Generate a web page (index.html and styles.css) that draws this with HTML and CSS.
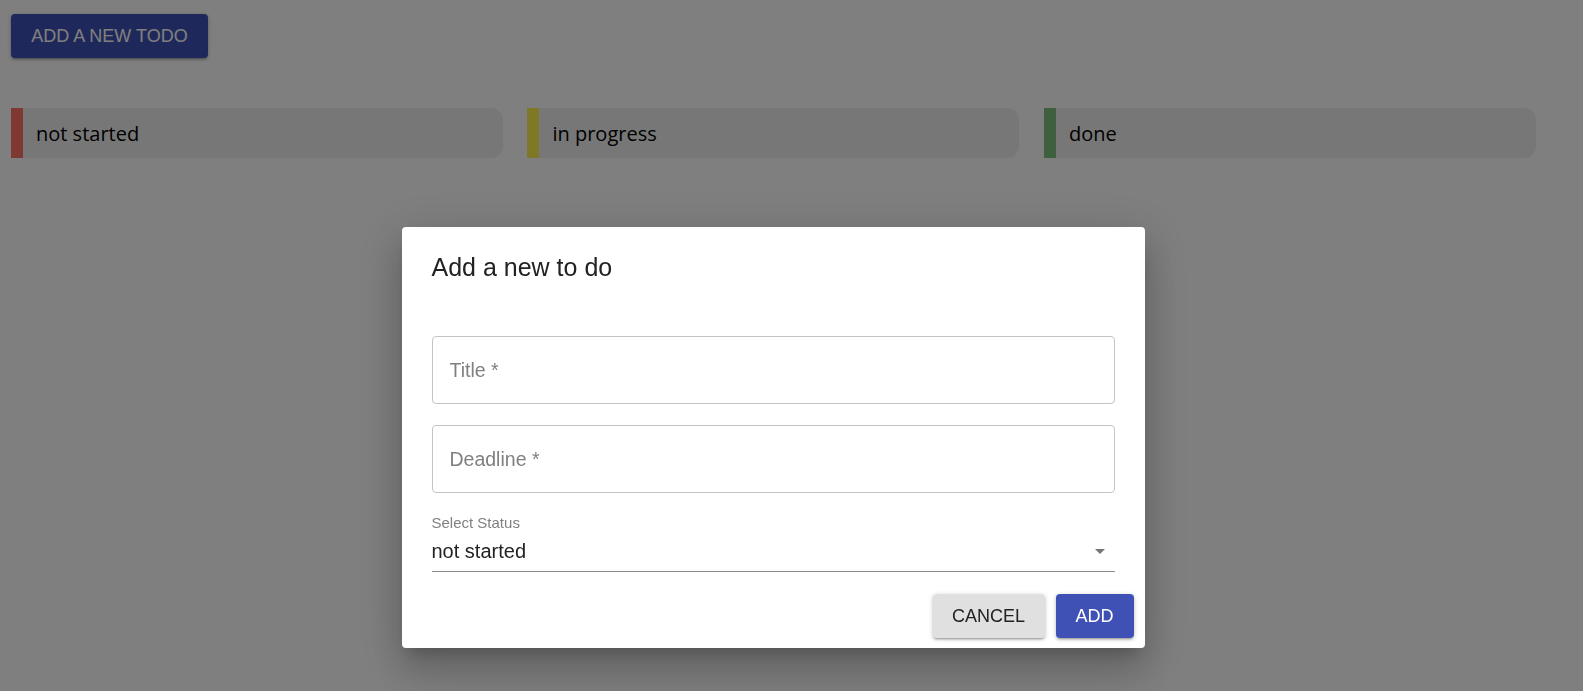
FILE: index.html
```html
<!DOCTYPE html>
<html>
<head>
<meta charset="utf-8">
<link rel="stylesheet" href="styles.css">
</head>
<body>
<div class="page">
  <div class="toolbar">
    <button class="btn-primary big">ADD A NEW TODO</button>
  </div>
  <div class="columns">
    <div class="column"><span class="bar red"></span><span class="col-title">not started</span></div>
    <div class="column"><span class="bar yellow"></span><span class="col-title">in progress</span></div>
    <div class="column"><span class="bar green"></span><span class="col-title">done</span></div>
  </div>
</div>
<div class="overlay">
  <div class="dialog">
    <h2 class="dialog-title">Add a new to do</h2>
    <div class="dialog-content">
      <div class="field"><span class="placeholder">Title *</span></div>
      <div class="field"><span class="placeholder">Deadline *</span></div>
      <div class="select">
        <div class="select-label">Select Status</div>
        <div class="select-row">
          <span class="select-value">not started</span>
          <svg class="caret" width="24" height="24" viewBox="0 0 24 24"><path d="M7 10l5 5 5-5z" fill="#757575"/></svg>
        </div>
      </div>
    </div>
    <div class="dialog-actions">
      <button class="btn-default">CANCEL</button>
      <button class="btn-primary">ADD</button>
    </div>
  </div>
</div>
</body>
</html>
```

FILE: styles.css
```css
html, body {
  margin: 0;
  padding: 0;
  background: #ffffff;
  font-family: "Liberation Sans", Arial, sans-serif;
}

.page {
  padding: 14px 11px;
}

.toolbar {
  display: flex;
}

button {
  font-family: "Liberation Sans", Arial, sans-serif;
  border: none;
  border-radius: 4px;
  cursor: pointer;
}

.btn-primary {
  background: #3f51b5;
  color: #ffffff;
  font-size: 18px;
  height: 44px;
  padding: 0 20px;
  box-shadow: 0 1px 5px rgba(0,0,0,0.2), 0 2px 2px rgba(0,0,0,0.14), 0 3px 1px -2px rgba(0,0,0,0.12);
}

.btn-primary.big {
  width: 197px;
  padding: 0;
}

.btn-default {
  background: #e0e0e0;
  color: #222222;
  font-size: 18px;
  height: 44px;
  width: 112px;
  box-shadow: 0 1px 5px rgba(0,0,0,0.2), 0 2px 2px rgba(0,0,0,0.14), 0 3px 1px -2px rgba(0,0,0,0.12);
}

.columns {
  display: grid;
  grid-template-columns: repeat(3, 491.67px);
  column-gap: 24.8px;
  margin-top: 50px;
}

.column {
  display: flex;
  align-items: center;
  height: 50px;
  background: #eeeeee;
  border-radius: 0 12px 12px 0;
}

.bar {
  width: 12px;
  align-self: stretch;
}

.bar.red { background: #fb7265; }
.bar.yellow { background: #fff04f; }
.bar.green { background: #7fbe7d; }

.col-title {
  margin-left: 13px;
  font-family: "Open Sans", "Noto Sans", sans-serif;
  font-size: 20px;
  color: #000000;
}

.overlay {
  position: fixed;
  inset: 0;
  background: rgba(0,0,0,0.5);
  display: flex;
  justify-content: center;
  align-items: flex-start;
}

.dialog {
  margin-top: 227px;
  margin-left: -37px;
  width: 743px;
  height: 421px;
  background: #ffffff;
  border-radius: 4px;
  box-shadow: 0 11px 15px -7px rgba(0,0,0,0.2), 0 24px 38px 3px rgba(0,0,0,0.14), 0 9px 46px 8px rgba(0,0,0,0.12);
  display: flex;
  flex-direction: column;
  box-sizing: border-box;
}

.dialog-title {
  margin: 0;
  padding: 24px 30px 0;
  font-size: 25px;
  font-weight: 400;
  line-height: 32px;
  color: #222222;
}

.dialog-content {
  padding: 53px 30px 0;
  display: flex;
  flex-direction: column;
  gap: 21px;
}

.field {
  height: 68px;
  border: 1px solid #c4c4c4;
  border-radius: 4px;
  box-sizing: border-box;
  display: flex;
  align-items: center;
  padding-left: 17px;
}

.placeholder {
  font-size: 19.5px;
  color: #808080;
}

.select {
  margin-top: 1px;
}

.select-label {
  font-size: 15px;
  color: #808080;
  line-height: 16px;
}

.select-row {
  display: flex;
  align-items: center;
  justify-content: space-between;
  height: 41px;
  box-sizing: border-box;
  border-bottom: 1px solid #8a8a8a;
}

.select-value {
  font-size: 20px;
  color: #222222;
}

.caret {
  margin-right: 3px;
}

.dialog-actions {
  display: flex;
  justify-content: flex-end;
  gap: 11px;
  padding: 22px 11px 0;
}

.dialog-actions .btn-primary {
  width: 78px;
  padding: 0;
}
```
